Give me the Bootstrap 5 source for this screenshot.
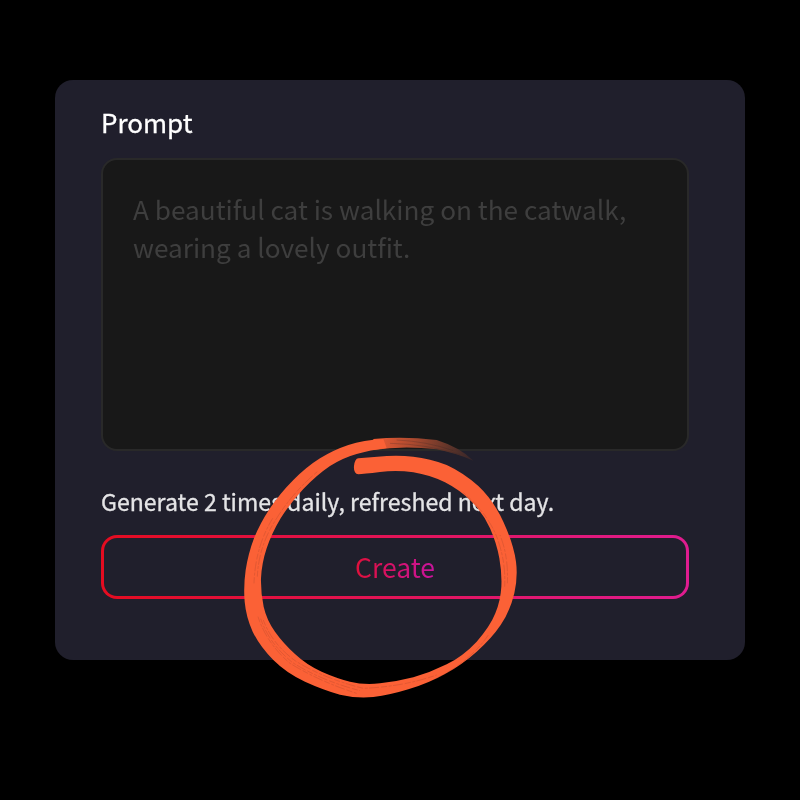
<!DOCTYPE html>
<html lang="en">
<head>
<meta charset="utf-8">
<title>Prompt</title>
<link href="https://cdn.jsdelivr.net/npm/bootstrap@5.3.0/dist/css/bootstrap.min.css" rel="stylesheet">
<style>
html, body { background: #000; height: 100%; }
body { font-family: "Noto Sans CJK SC", "Noto Sans", sans-serif; overflow: hidden; position: relative; }
.panel-box { width: 690px; height: 580px; margin-top: 80px; background: #201f2c; border-radius: 18px; padding: 24px 56px 0 46px; }
.prompt-label { font-size: 26px; line-height: 36px; color: #fff; margin: 0 0 18px; -webkit-text-stroke: .3px #fff; filter: blur(.6px); }
.prompt-input.form-control { display: block; height: 293px; padding: 30px 30px; font-size: 26.2px; line-height: 38px; background: #181818; color: #ddd; border: 2px solid #292929; border-radius: 16px; resize: none; box-shadow: none; filter: blur(.4px); }
.prompt-input.form-control::placeholder { color: #3e3e3e; opacity: 1; }
.quota-note { font-size: 23.1px; line-height: 32px; color: #e4e4e6; margin: 34px 0 18px; -webkit-text-stroke: .3px #e4e4e6; filter: blur(.6px); }
.create-btn.btn { display: block; width: 100%; height: 64px; padding: 0; border: 3px solid transparent; border-radius: 16px; background: linear-gradient(#201f2c, #201f2c) padding-box, linear-gradient(90deg, #e40c20, #e01c90) border-box; filter: blur(.3px); }
.create-text { font-size: 26.5px; line-height: 56px; background: linear-gradient(90deg, #e0103a, #c8149e); -webkit-background-clip: text; background-clip: text; color: transparent; }
.scribble { position: absolute; left: 230px; top: 420px; width: 300px; height: 290px; pointer-events: none; }
</style>
</head>
<body>
<main class="panel-box mx-auto d-flex flex-column">
  <label class="prompt-label" for="prompt">Prompt</label>
  <textarea class="prompt-input form-control" id="prompt" placeholder="A beautiful cat is walking on the catwalk, wearing a lovely outfit."></textarea>
  <p class="quota-note">Generate 2 times daily, refreshed next day.</p>
  <button class="create-btn btn" type="button"><span class="create-text">Create</span></button>
</main>
<svg class="scribble" viewBox="0 0 900 870" aria-hidden="true">
  <defs>
    <linearGradient id="tailFade" gradientUnits="userSpaceOnUse" x1="430" y1="70" x2="730" y2="115">
      <stop offset="0" stop-color="#f05c34"/>
      <stop offset=".4" stop-color="#a8492f"/>
      <stop offset=".75" stop-color="#5e3429"/>
      <stop offset="1" stop-color="#33252a"/>
    </linearGradient>
  </defs>
  <path fill="url(#tailFade)" d="M430,57 Q520,48 620,60 Q690,82 730,122 Q680,100 620,88 Q520,76 430,90 Z"/>
  <g fill="none" stroke="#2a2226" stroke-width="1.2" opacity=".55">
    <path d="M500,60 Q590,64 670,92"/>
    <path d="M480,70 Q590,72 690,104"/>
  </g>
  <path fill="#fb6136" d="M385,115 L442,110 Q500,105 550,110 Q600,115 650,135 Q700,158 745,198 Q790,240 820,305 Q850,370 858,425 Q864,470 853,520 Q840,575 812,615 Q785,655 740,695 Q695,735 645,762 Q595,790 535,808 Q480,825 430,831 Q380,836 330,824 Q280,810 225,785 Q170,760 130,720 Q90,680 68,635 Q48,590 44,545 Q40,500 47,450 Q55,400 72,355 Q90,310 120,265 Q150,220 190,180 Q230,140 270,115 Q310,90 355,75 Q400,60 460,57 L470,84 Q420,90 380,102 Q340,113 300,138 Q260,165 220,207 Q180,250 152,295 Q125,340 110,385 Q95,430 93,475 Q92,520 101,560 Q110,600 135,635 Q160,670 195,702 Q230,735 275,755 Q320,775 360,785 Q400,795 450,790 Q500,785 550,772 Q600,758 650,733 Q700,708 740,665 Q780,620 796,580 Q812,540 814,500 Q816,460 808,415 Q800,370 780,325 Q760,280 725,245 Q690,210 645,187 Q600,165 550,157 Q500,150 450,156 Q400,162 385,163 Q370,160 372,138 Q375,115 385,115 Z"/>
  <g fill="none" stroke="#7d3826" stroke-width="1" opacity=".6" stroke-dasharray="18 5 9 4 30 6">
    <path d="M100,600 Q125,670 195,722 Q280,775 400,805 Q520,800 620,765"/>
    <path d="M92,596 Q118,672 188,728 Q275,782 390,812"/>
    <path d="M84,590 Q110,670 180,730 Q270,785 380,820"/>
    <path d="M824,500 Q828,420 798,345 Q768,275 700,218"/>
    <path d="M832,490 Q836,410 810,345"/>
    <path d="M82,470 Q86,380 135,303 Q185,220 262,155"/>
    <path d="M72,490 Q76,380 128,295"/>
    <path d="M620,775 Q720,725 775,645"/>
  </g>
</svg>
<script src="https://cdn.jsdelivr.net/npm/bootstrap@5.3.0/dist/js/bootstrap.bundle.min.js"></script>
</body>
</html>
